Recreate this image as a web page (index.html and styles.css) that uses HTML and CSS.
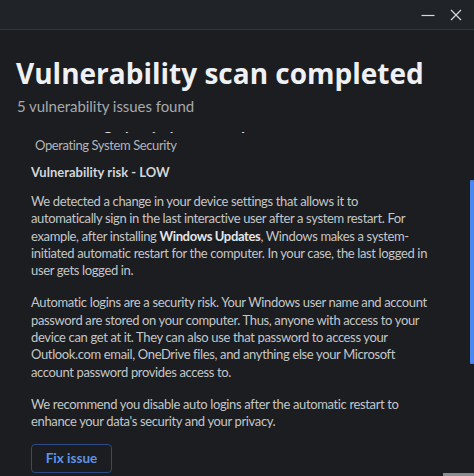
FILE: index.html
```html
<!DOCTYPE html>
<html>
<head>
<meta charset="utf-8">
<link rel="stylesheet" href="styles.css">
</head>
<body>
<div class="window">
  <div class="titlebar">
    <span class="ctl min"><svg width="16" height="16" viewBox="0 0 16 16"><path d="M1.5 8.5h13" stroke="#d6d8db" stroke-width="1.2"/></svg></span>
    <span class="ctl close"><svg width="16" height="16" viewBox="0 0 16 16"><path d="M3 3l10 10M13 3L3 13" stroke="#d6d8db" stroke-width="1.2"/></svg></span>
  </div>
  <div class="header">
    <h1 class="title">Vulnerability scan completed</h1>
    <div class="subtitle">5 vulnerability issues found</div>
  </div>
  <div class="scroll">
    <div class="content">
      <div class="clipped">Autolog by any system setup</div>
      <div class="category">Operating System Security</div>
      <div class="risk">Vulnerability risk - LOW</div>
      <p class="para">We detected a change in your device settings that allows it to<br>automatically sign in the last interactive user after a system restart. For<br>example, after installing <b>Windows Updates</b>, Windows makes a system-<br>initiated automatic restart for the computer. In your case, the last logged in<br>user gets logged in.</p>
      <p class="para">Automatic logins are a security risk. Your Windows user name and account<br>password are stored on your computer. Thus, anyone with access to your<br>device can get at it. They can also use that password to access your<br>Outlook.com email, OneDrive files, and anything else your Microsoft<br>account password provides access to.</p>
      <p class="para">We recommend you disable auto logins after the automatic restart to<br>enhance your data's security and your privacy.</p>
      <button class="fix">Fix issue</button>
    </div>
    <div class="vbar"></div>
    <div class="hbar"></div>
  </div>
</div>
</body>
</html>
```

FILE: styles.css
```css
html, body {
  margin: 0;
  padding: 0;
  background: #1b1d20;
}
body {
  width: 474px;
  height: 476px;
  overflow: hidden;
  font-family: "Lato", "Open Sans", sans-serif;
}
.window {
  display: flex;
  flex-direction: column;
  height: 476px;
}
.titlebar {
  height: 29px;
  background: #202327;
  border-bottom: 1px solid #34373b;
  display: flex;
  justify-content: flex-end;
  align-items: center;
  gap: 12px;
  padding-right: 10px;
  flex-shrink: 0;
}
.ctl {
  display: flex;
  width: 16px;
  height: 16px;
}
.header {
  padding: 25px 16px 0 16px;
  flex-shrink: 0;
}
.title {
  margin: 0;
  font-family: "Open Sans", "Noto Sans", sans-serif;
  font-size: 28px;
  line-height: 36px;
  font-weight: 700;
  color: #eef0f4;
}
.subtitle {
  margin-top: 5px;
  font-size: 15px;
  line-height: 20px;
  letter-spacing: -0.05px;
  color: #a7a9ad;
  padding-left: 1px;
}
.scroll {
  position: relative;
  flex: 1;
  overflow: hidden;
  margin-top: 16px;
}
.content {
  padding-left: 31px;
  margin-top: -18px;
  white-space: nowrap;
}
.clipped {
  font-size: 15px;
  font-weight: 700;
  line-height: 20px;
  color: #e0e2e5;
  padding-left: 28px;
}
.category {
  font-size: 13px;
  line-height: 18px;
  letter-spacing: -0.4px;
  color: #b3b5b9;
  padding-left: 4px;
  margin-top: 2px;
}
.risk {
  margin-top: 9px;
  font-size: 13px;
  font-weight: 700;
  line-height: 18px;
  color: #d3d5d8;
}
.para {
  margin: 12px 0 0 0;
  font-size: 13px;
  line-height: 17.3px;
  letter-spacing: -0.36px;
  color: #c4c6c9;
}
.para b {
  font-weight: 700;
  color: #e3e5e8;
}
.para + .para {
  margin-top: 15px;
}
.fix {
  display: block;
  margin-top: 13px;
  width: 81px;
  height: 29px;
  background: transparent;
  border: 1.5px solid #2c4a86;
  border-radius: 4px;
  color: #5f93e8;
  font-family: inherit;
  font-size: 13.5px;
  font-weight: 700;
  padding: 0;
}
.vbar {
  position: absolute;
  right: 0;
  top: 48px;
  width: 4px;
  height: 184px;
  background: #4a87ee;
  border-radius: 1px;
}
.hbar {
  position: absolute;
  right: 0;
  bottom: 0;
  width: 31px;
  height: 3px;
  background: #8a8c90;
}
```
